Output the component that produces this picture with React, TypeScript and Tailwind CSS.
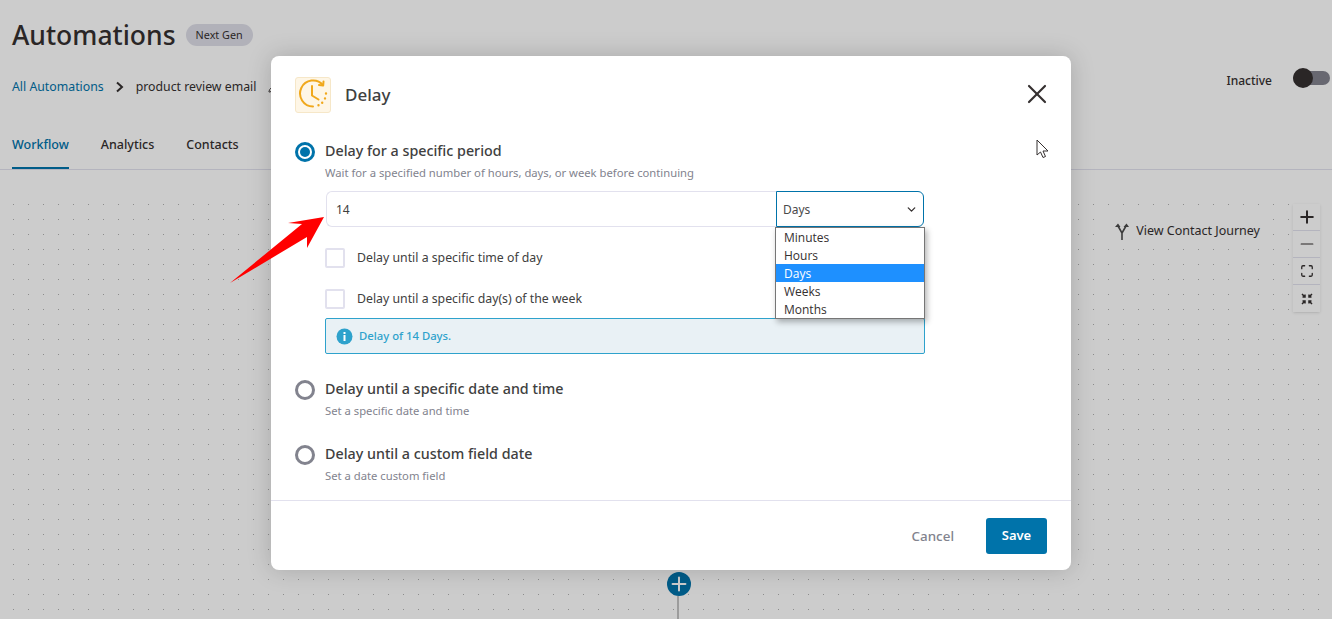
import { ChevronDown, Maximize, Minus, Pencil, Plus, X } from "lucide-react";

const tabs = ["Analytics", "Contacts"];
const units = ["Minutes", "Hours", "Days", "Weeks", "Months"];

function Radio({ checked }: { checked?: boolean }) {
  if (checked) {
    return (
      <span className="flex h-5 w-5 shrink-0 items-center justify-center rounded-full border-[3px] border-[#0073aa]">
        <span className="h-2.5 w-2.5 rounded-full bg-[#0073aa]" />
      </span>
    );
  }
  return <span className="block h-5 w-5 shrink-0 rounded-full border-[3px] border-[#82838e]" />;
}

function Option({ title, hint, checked }: { title: string; hint: string; checked?: boolean }) {
  return (
    <div className="flex gap-2.5">
      <div className="pt-[3px]">
        <Radio checked={checked} />
      </div>
      <div>
        <div className="text-[14.300px] leading-[24px] font-medium text-[#404040]">{title}</div>
        <div className="mt-[2px] text-[11.250px] leading-[16px] text-[#82838e]">{hint}</div>
      </div>
    </div>
  );
}

function Check({ label }: { label: string }) {
  return (
    <div className="flex h-5 items-center gap-3">
      <span className="h-5 w-5 rounded-[2px] border-2 border-[#e2e1ee] bg-white" />
      <span className="text-[12.300px] text-[#404040]">{label}</span>
    </div>
  );
}

function ClockIcon() {
  return (
    <svg className="-mt-[2px]" width="30" height="30" viewBox="0 0 30 30" fill="none" stroke="#f0a81c" strokeWidth="2" strokeLinecap="round" strokeLinejoin="round">
      <path d="M25 6.100A13 13 0 1 0 15 27.500" />
      <path d="M25.500 2.500 25.200 6.500 21 6" />
      <path d="M14 7V16.500l6.500 4" />
      <path d="M28 14.500v0M27 19.400v0M24.200 23.700v0M20.500 26.300v0" strokeWidth="2.400" />
    </svg>
  );
}

function JourneyIcon() {
  return (
    <svg width="16" height="18" viewBox="0 0 16 18" fill="none" stroke="#4a4a4a" strokeWidth="1.600">
      <path d="M8 18v-7L4 4M8 11l4-7" />
      <path d="M1 5 4 1.500 6.500 5ZM9.500 5l3-3.500L15 5Z" fill="#4a4a4a" stroke="none" />
    </svg>
  );
}

function ShrinkIcon() {
  return (
    <svg width="12" height="12" viewBox="0 0 12 12" fill="none" stroke="#353030" strokeWidth="1.500">
      <path d="M1 1l3 3M4 1.500V4H1.500M11 1 8 4M8 1.500V4h2.500M1 11l3-3M1.500 8H4v2.500M11 11 8 8M10.500 8H8v2.500" />
    </svg>
  );
}

export default function App() {
  return (
    <div className="relative h-[619px] w-[1332px] overflow-hidden bg-white font-['Noto_Sans',sans-serif] text-[#353030]">
      <div className="flex h-full flex-col">
        <div className="pt-[16px] pr-[2px] pl-3">
          <div className="flex items-center gap-[10px]">
            <h1 className="text-[26.500px] leading-[38px] font-medium text-[#353030]">Automations</h1>
            <span className="rounded-full bg-[#dedee8] px-[10px] py-[3px] text-[10.800px] leading-[16px]">Next Gen</span>
          </div>
          <div className="mt-[23px] flex h-[20px] items-center justify-between text-[12.300px]">
            <div className="flex items-center">
              <span className="text-[#0073aa]">All Automations</span>
              <svg className="mx-[11px]" width="10" height="12" viewBox="0 0 10 12" fill="none" stroke="#353030" strokeWidth="2">
                <path d="M2 1.500 7 6l-5 4.500" />
              </svg>
              <span>product review email</span>
              <Pencil size={11} className="ml-[12px]" />
            </div>
            <div className="flex -translate-y-[9px] items-center gap-[21px]">
              <span className="translate-y-[3px] text-[12px] font-medium">Inactive</span>
              <span className="relative h-[14px] w-[37px] rounded-full bg-[#82838e]">
                <span className="absolute top-[-3px] left-0 h-5 w-5 rounded-full bg-[#353030]" />
              </span>
            </div>
          </div>
        </div>
        <div className="mt-[38px] flex h-[35px] gap-[32px] border-b border-[#e2e1ee] px-3 pt-px text-[12.500px] font-medium">
          <span className="h-[33px] border-b-2 border-[#0073aa] text-[#0073aa]">Workflow</span>
          {tabs.map((t) => (
            <span key={t}>{t}</span>
          ))}
          <span className="mt-[3px] h-[12px] w-[6px] bg-[#f0a81c]" />
        </div>
        <div className="flex flex-1 flex-col pt-[27px]">
          <div className="relative flex-1 bg-[radial-gradient(circle_at_7.500px_7.500px,#b0b0b0_0.600px,transparent_0.700px)] [background-position:6px_0px] bg-[size:15px_15px]">
            <div className="flex items-start justify-end gap-[31px] pt-[7px] pr-[12px]">
              <div className="mt-[9px] flex items-center gap-[6px] bg-white pt-[9px] pr-[2px] pb-[7px] pl-2 text-[12.500px]">
                <JourneyIcon />
                <span>View Contact Journey</span>
              </div>
              <div className="flex w-[27px] flex-col bg-white shadow-sm">
                <span className="flex h-[27px] items-center justify-center border-b border-[#e2e1ee]">
                  <Plus size={20} strokeWidth={2.400} />
                </span>
                <span className="flex h-[27px] items-center justify-center border-b border-[#e2e1ee]">
                  <Minus size={20} strokeWidth={1.400} />
                </span>
                <span className="flex h-[27px] items-center justify-center border-b border-[#e2e1ee]">
                  <Maximize size={14} strokeWidth={2.200} />
                </span>
                <span className="flex h-[27px] items-center justify-center">
                  <ShrinkIcon />
                </span>
              </div>
            </div>
            <div className="absolute top-[375px] left-[667px] flex h-6 w-6 items-center justify-center rounded-full bg-[#0073aa] text-white">
              <Plus size={22} strokeWidth={2.200} />
            </div>
            <div className="absolute top-[399px] left-[677px] h-[30px] w-[2px] bg-[#c4c4c4]" />
          </div>
        </div>
      </div>

      {/* overlay + dialog */}
      <div className="absolute inset-0 bg-black/20" />
      <div className="absolute top-[56px] left-[271px] w-[800px] rounded-[8px] bg-white shadow-[0_0_24px_rgba(0,0,0,0.18)]">
        <div className="flex items-center justify-between px-6 pt-[21px]">
          <div className="flex items-center gap-[14px]">
            <span className="flex h-9 w-9 items-center justify-center rounded-[3px] border border-[#f6e7c8] bg-[#fef6e6]">
              <ClockIcon />
            </span>
            <span className="-mt-px text-[17px] font-medium text-[#404040]">Delay</span>
          </div>
          <X size={32} strokeWidth={1.600} className="-mt-[2px] -mr-[6px] text-[#353030]" />
        </div>

        <div className="px-6 pt-[26px]">
          <Option checked title="Delay for a specific period" hint="Wait for a specified number of hours, days, or week before continuing" />
          <div className="mt-[10px] ml-[30px] w-[600px]">
            <div className="ml-px flex h-9 w-[598px]">
              <div className="flex flex-1 items-center rounded-l-[6px] border border-r-0 border-[#e2e1ee] pt-px pl-[9px] text-[12px] text-[#404040]">14</div>
              <div className="flex w-[148px] items-center justify-between rounded-r-[6px] border border-[#0073aa] pt-px pr-[5px] pl-[6px] text-[12px] text-[#4a4a4a]">
                Days
                <ChevronDown size={13} strokeWidth={2.400} className="text-[#353030]" />
              </div>
            </div>
            <div className="mt-[21px] flex flex-col gap-[21px]">
              <Check label="Delay until a specific time of day" />
              <Check label="Delay until a specific day(s) of the week" />
            </div>
            <div className="mt-[9px] flex h-9 items-center gap-[6px] rounded-[2px] border border-[#2ea2cc] bg-[#e9f1f5] pl-[10px] text-[11.300px] font-medium text-[#2ea2cc]">
              <svg width="17" height="17" viewBox="0 0 17 17">
                <circle cx="8.500" cy="8.500" r="8" fill="#2ea2cc" />
                <rect x="7.500" y="7" width="2" height="6" fill="#fff" />
                <rect x="7.500" y="4" width="2" height="2" fill="#fff" />
              </svg>
              Delay of 14 Days.
            </div>
          </div>
          <div className="mt-[23px]">
            <Option title="Delay until a specific date and time" hint="Set a specific date and time" />
          </div>
          <div className="mt-[23px]">
            <Option title="Delay until a custom field date" hint="Set a date custom field" />
          </div>
        </div>

        <div className="mt-[16px] flex h-[70px] items-center justify-end gap-8 border-t border-[#e2e1ee] px-6">
          <span className="pt-px text-[13.400px] font-medium text-[#82838e]">Cancel</span>
          <span className="flex h-9 w-[61px] items-center justify-center rounded-[3px] bg-[#0073aa] text-[13px] font-semibold text-white">Save</span>
        </div>

        {/* open native select list */}
        <div className="absolute top-[171px] left-[504px] w-[150px] border border-[#767676] bg-white font-['Open_Sans',sans-serif] text-[12px] leading-[18px] text-[#353030] shadow-[2px_3px_6px_rgba(0,0,0,0.3)]">
          {units.map((u) => (
            <div key={u} className={u === "Days" ? "h-[18px] bg-[#1e90ff] pt-px pl-[8px] text-white" : "h-[18px] pt-px pl-[8px]"}>
              {u}
            </div>
          ))}
        </div>
      </div>

      {/* annotation arrow */}
      <svg className="absolute top-[214px] left-[228px]" width="100" height="72" viewBox="0 0 100 72">
        <path d="M2 69 74 10 60 9 96 3 79 34 79 23Z" fill="#ff0000" />
      </svg>

      {/* mouse pointer */}
      <svg className="absolute top-[139px] left-[1036px]" width="14" height="20" viewBox="0 0 14 20">
        <path d="M1 1v15l3.500-3 2.500 5.500 2.500-1-2.500-5.500h5Z" fill="#fff" stroke="#353030" strokeWidth="1" />
      </svg>
    </div>
  );
}
